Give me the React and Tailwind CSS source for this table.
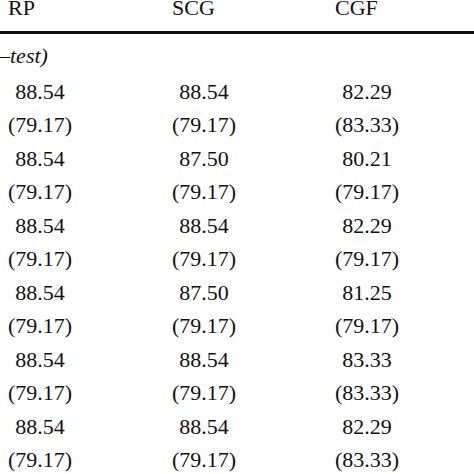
import React from 'react';

const rows = [
  ['88.54', '88.54', '82.29'],
  ['(79.17)', '(79.17)', '(83.33)'],
  ['88.54', '87.50', '80.21'],
  ['(79.17)', '(79.17)', '(79.17)'],
  ['88.54', '88.54', '82.29'],
  ['(79.17)', '(79.17)', '(79.17)'],
  ['88.54', '87.50', '81.25'],
  ['(79.17)', '(79.17)', '(79.17)'],
  ['88.54', '88.54', '83.33'],
  ['(79.17)', '(79.17)', '(83.33)'],
  ['88.54', '88.54', '82.29'],
  ['(79.17)', '(79.17)', '(83.33)'],
];

const App = () => {
  return (
    <div className="w-[474px] h-[474px] overflow-hidden bg-white text-[#111] text-[22px] font-['Liberation_Serif']">
      <div className="h-[31px] leading-[16px] pl-[8px] grid grid-cols-[164px_163px_1fr]">
        <div>RP</div>
        <div>SCG</div>
        <div>CGF</div>
      </div>
      <div className="h-[3px] bg-[#111]" />
      <div className="pt-[5px] pb-[2px] leading-[33.5px] italic -ml-[1px]">–test)</div>
      <div className="leading-[33.5px]">
        {rows.map((r, i) => (
          <div key={i} className="pl-[8px] grid grid-cols-[164px_163px_1fr]">
            {r.map((v, j) => (
              <div key={j} className="w-[64px] text-center whitespace-nowrap">
                {v}
              </div>
            ))}
          </div>
        ))}
      </div>
    </div>
  );
};

export default App;
